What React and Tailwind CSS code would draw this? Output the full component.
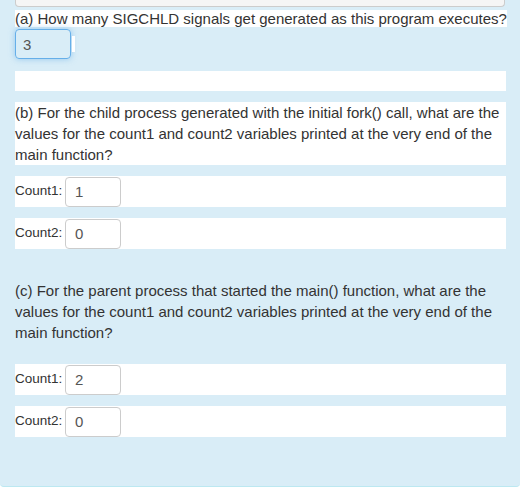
import { useState } from 'react'

const font = { fontFamily: '"Liberation Sans", Arial, sans-serif' }

function CountRow({ label, value, className = '' }) {
  return (
    <div className={`flex h-[31px] w-[491px] items-center bg-white ${className}`}>
      <span className="w-[50px] text-[13.5px] text-[#333]">{label}</span>
      <input
        readOnly
        value={value}
        className="h-[30px] w-[56px] rounded-[4px] border border-[#ccc] px-[9px] text-[15px] text-[#555] outline-none"
      />
    </div>
  )
}

export default function App() {
  const [answer] = useState('3')
  return (
    <div className="min-h-[500px] bg-white" style={font}>
      <div className="h-[487px] rounded-b-[4px] border-b border-[#bce8f1] bg-[#d9edf7] px-[15px]">
        <div className="h-[7px] w-[490px] rounded-b-[4px] border border-t-0 border-[#ccc] bg-[#f5f5f5]" />

        <div className="mt-[3px] whitespace-nowrap text-[15px] leading-[17px] text-[#333]">
          <span className="bg-white">(a) How many SIGCHLD signals get generated as this program executes?</span>
        </div>

        <div className="mt-[2px] flex items-start">
          <input
            readOnly
            value={answer}
            className="h-[30px] w-[56px] rounded-[4px] border border-[#66afe9] px-[7px] text-[15px] text-[#555] shadow-[0_0_6px_rgba(102,175,233,0.6)] outline-none"
          />
          <span className="ml-[1px] mt-[7px] h-[16px] w-[3px] bg-white" />
        </div>

        <div className="mt-[12px] h-[20px] w-[491px] bg-white" />

        <p className="mt-[11px] w-[491px] bg-white text-[15px] leading-[21px] text-[#333]">
          (b) For the child process generated with the initial fork() call, what are the values for the count1 and
          count2 variables printed at the very end of the main function?
        </p>

        <CountRow label="Count1:" value="1" className="mt-[11px]" />
        <CountRow label="Count2:" value="0" className="mt-[11px]" />

        <p className="mt-[31px] w-[491px] text-[15px] leading-[21px] text-[#333]">
          (c) For the parent process that started the main() function, what are the values for the count1 and count2
          variables printed at the very end of the main function?
        </p>

        <CountRow label="Count1:" value="2" className="mt-[21px]" />
        <CountRow label="Count2:" value="0" className="mt-[11px]" />
      </div>
    </div>
  )
}
